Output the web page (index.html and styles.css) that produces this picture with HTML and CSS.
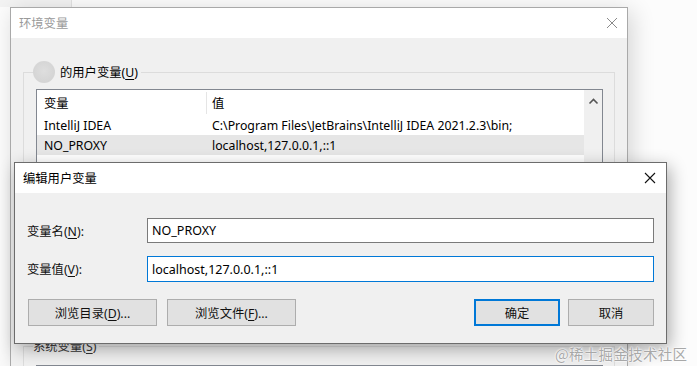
FILE: index.html
```html
<!DOCTYPE html>
<html lang="zh-CN">
<head>
<meta charset="utf-8">
<link rel="stylesheet" href="styles.css">
</head>
<body>
<div class="desk-strip"></div>

<div class="win back">
  <div class="titlebar">
    <span class="title">环境变量</span>
    <svg class="close" width="12" height="12" viewBox="0 0 12 12"><path d="M1 1L11 11M11 1L1 11" stroke="#8a8a8a" stroke-width="1"/></svg>
  </div>
  <div class="winbody">
    <fieldset class="group">
      <legend class="legend"><span class="avatar"></span><span>的用户变量(<u>U</u>)</span></legend>
      <div class="list">
        <div class="cols">
          <div class="rows">
            <div class="row head"><span class="c1">变量</span><span class="c2">值</span></div>
            <div class="row"><span class="c1">IntelliJ IDEA</span><span class="c2">C:\Program Files\JetBrains\IntelliJ IDEA 2021.2.3\bin;</span></div>
            <div class="row sel"><span class="c1">NO_PROXY</span><span class="c2">localhost,127.0.0.1,::1</span></div>
            <div class="row"><span class="c1"></span><span class="c2"></span></div>
          </div>
          <div class="scroll">
            <svg width="11" height="7" viewBox="0 0 11 7"><path d="M1.5 5.5L5.5 1.5L9.5 5.5" fill="none" stroke="#555" stroke-width="1.6"/></svg>
          </div>
        </div>
      </div>
    </fieldset>
    <fieldset class="group sys">
      <legend class="legend plain"><span>系统变量(<u>S</u>)</span></legend>
      <div class="list short"></div>
    </fieldset>
  </div>
</div>

<div class="win front">
  <div class="titlebar">
    <span class="title">编辑用户变量</span>
    <svg class="close" width="12" height="12" viewBox="0 0 12 12"><path d="M1 1L11 11M11 1L1 11" stroke="#111" stroke-width="1.1"/></svg>
  </div>
  <div class="winbody form">
    <div class="field">
      <label class="label">变量名(<u>N</u>):</label>
      <div class="input">NO_PROXY</div>
    </div>
    <div class="field">
      <label class="label">变量值(<u>V</u>):</label>
      <div class="input focus">localhost,127.0.0.1,::1</div>
    </div>
    <div class="buttons">
      <button class="btn wide">浏览目录(<u>D</u>)...</button>
      <button class="btn wide">浏览文件(<u>F</u>)...</button>
      <span class="spacer"></span>
      <button class="btn ok">确定</button>
      <button class="btn">取消</button>
    </div>
  </div>
</div>

<div class="watermark">@稀土掘金技术社区</div>
</body>
</html>
```
FILE: styles.css
```css
html, body {
  margin: 0;
  padding: 0;
}
body {
  width: 697px;
  height: 366px;
  overflow: hidden;
  position: relative;
  background: #fcfcfc;
  font-family: "Segoe UI", "Noto Sans", "Noto Sans CJK SC", sans-serif;
  font-size: 12.3px;
  color: #000;
}
u { text-decoration: underline; text-underline-offset: 2px; }

.desk-strip {
  position: absolute;
  left: 0; top: 0;
  width: 71px; height: 7px;
  background: #f3f3f3;
  border-right: 1px solid #e2e2e2;
}

.win {
  position: absolute;
  box-sizing: border-box;
  display: flex;
  flex-direction: column;
  overflow: hidden;
}
.back {
  left: 10px; top: 7px;
  width: 618px; height: 359px;
  border: 1px solid #a9a9a9;
  border-bottom: none;
  box-shadow: 4px 4px 22px rgba(0,0,0,0.16);
  background: #f0f0f0;
}
.front {
  left: 14px; top: 162px;
  width: 653px; height: 182px;
  border: 1px solid #6c6c6c;
  box-shadow: 3px 5px 16px rgba(0,0,0,0.32);
  background: #f0f0f0;
}

.titlebar {
  background: #fff;
  height: 30px;
  flex: none;
  display: flex;
  align-items: center;
  justify-content: space-between;
  padding: 0 9px 0 8px;
}
.front .titlebar { height: 30px; padding: 0 10px 0 8px; }
.back .title { color: #9a9a9a; }
.close { display: block; }

.winbody { flex: 1; }
.back .winbody { padding: 22px 12px 0 12px; }

.group {
  margin: 0;
  border: 1px solid #dcdcdc;
  padding: 11px 11px 12px 12px;
  min-width: 0;
}
.legend {
  padding: 0 3px 0 0;
  margin-left: -1px;
  display: flex;
  align-items: center;
  gap: 5px;
  height: 24px;
}
.avatar {
  width: 22px; height: 22px;
  border-radius: 50%;
  background: radial-gradient(circle at 50% 45%, #dedede, #d0d0d0);
  filter: blur(0.5px);
  margin-left: -2px;
}
.legend.plain { height: 18px; margin-left: -3px; color: #333; }

.list {
  border: 1px solid #828790;
  background: #fff;
  height: 120px;
  margin-top: -6px;
}
.list.short { height: 40px; margin-top: -1px; }
.cols { display: flex; height: 100%; }
.rows { flex: 1; }
.row {
  display: flex;
  height: 20px;
  align-items: center;
}
.row.head { height: 25px; }
.row.head .c2 { border-left: 1px solid #e5e5e5; padding-left: 5px; height: 22px; display: flex; align-items: center; }
.c1 { width: 169px; padding-left: 7px; flex: none; box-sizing: border-box; }
.c2 { padding-left: 6px; }
.row.sel { background: #e6e6e6; }
.scroll {
  width: 18px;
  background: #f0f0f0;
  display: flex;
  justify-content: center;
  padding-top: 8px;
  box-sizing: border-box;
}
.scroll svg { display: block; }

.sys { margin-top: 113px; }

.form { padding: 25px 12px 0 11px; display: flex; flex-direction: column; }
.field {
  display: flex;
  align-items: center;
  margin-bottom: 13px;
}
.label { width: 120px; padding-left: 1px; color: #111; }
.input {
  flex: 1;
  height: 25px;
  box-sizing: border-box;
  border: 1px solid #7a7a7a;
  background: #fff;
  display: flex;
  align-items: center;
  padding-left: 4px;
  font-size: 12.5px;
}
.input.focus { border-color: #0078d7; height: 26px; }

.buttons {
  display: flex;
  gap: 10px;
  margin-top: 4px;
  padding-left: 2px;
}
.spacer { flex: 1; }
.btn {
  font: inherit;
  color: #111;
  height: 27px;
  width: 86px;
  background: #e1e1e1;
  border: 1px solid #adadad;
  border-radius: 0;
  padding: 0;
}
.btn.wide { width: 129px; }
.btn.ok { border: 2px solid #0078d7; margin-right: -2px; }

.watermark {
  position: absolute;
  left: 555px; top: 343px;
  font-family: "Noto Sans CJK SC", sans-serif;
  font-size: 14.5px;
  letter-spacing: 0.3px;
  color: #a8a8a8;
  text-shadow: 0 0 2px #fff, 0 0 2px #fff, 0 0 1px #fff;
}
```
